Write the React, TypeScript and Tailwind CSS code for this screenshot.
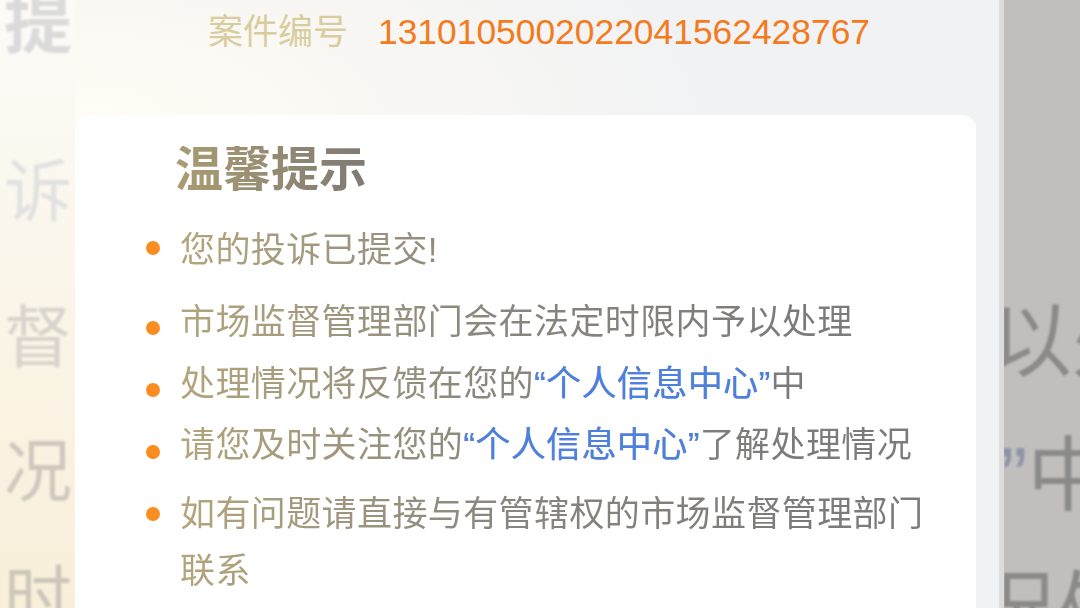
const cjk = "font-['Liberation_Sans','Noto_Sans_CJK_SC',sans-serif]";

type Item = { parts: { text: string; blue?: boolean }[]; gap: string; dot: string };

const items: Item[] = [
  { parts: [{ text: '您的投诉已提交!' }], gap: 'mt-[27px]', dot: 'mt-[20px]' },
  { parts: [{ text: '市场监督管理部门会在法定时限内予以处理' }], gap: 'mt-[15px]', dot: 'mt-[28px]' },
  {
    parts: [{ text: '处理情况将反馈在您的' }, { text: '“个人信息中心”', blue: true }, { text: '中' }],
    gap: 'mt-[5px]',
    dot: 'mt-[28px]',
  },
  {
    parts: [{ text: '请您及时关注您的' }, { text: '“个人信息中心”', blue: true }, { text: '了解处理情况' }],
    gap: 'mt-[4px]',
    dot: 'mt-[29px]',
  },
  { parts: [{ text: '如有问题请直接与有管辖权的市场监督管理部门联系' }], gap: 'mt-[12px]', dot: 'mt-[22px]' },
];

function LeftStrip() {
  return (
    <div className={`w-[75px] shrink-0 overflow-hidden bg-[linear-gradient(180deg,#fcfbf8,#faf5e8_50%,#f8efd9)] ${cjk}`}>
      <div className="blur-[1px] pl-[4px] text-[68px]">
        <div className="-mt-[50px] h-[160px] leading-[148px] font-bold text-[#dadada]">提</div>
        <div className="h-[164px] leading-[164px] text-[#e1e1e1]">诉</div>
        <div className="h-[128px] leading-[128px] text-[#d8d3cc]">督</div>
        <div className="h-[140px] leading-[140px] text-[#cfc8bf]">况</div>
        <div className="h-[112px] leading-[112px] text-[#ccc5bb]">时</div>
      </div>
    </div>
  );
}

function RightStrip() {
  return (
    <div className={`flex-1 overflow-hidden bg-[#c0bfbd] ${cjk}`}>
      <div className="whitespace-nowrap text-[82px] text-[#8a8a8a] blur-[1px]">
        <div className="-ml-[14px] mt-[275px] h-[134px] leading-[134px]">以处</div>
        <div className="-ml-[4px] h-[134px] leading-[134px]">
          <span className="text-[#8b93a8]">”</span>中
        </div>
        <div className="-ml-[30px] h-[134px] leading-[134px]">况处</div>
      </div>
    </div>
  );
}

export default function App() {
  return (
    <div className="flex h-[608px] w-[1080px] overflow-hidden bg-[#c0bfbd]">
      <LeftStrip />

      {/* phone screen */}
      <div className="flex w-[924px] shrink-0 flex-col bg-[#f1f2f4] bg-[radial-gradient(ellipse_640px_260px_at_0%_20%,#fffdf6_0%,#fbf9f3_35%,rgba(241,242,244,0)_100%)]">
        <div className={`flex h-[115px] shrink-0 items-baseline justify-center gap-[30px] pl-[4px] pt-[14px] leading-none ${cjk}`}>
          <span className="text-[35px] text-[#d9cda0]">案件编号</span>
          <span className="text-[35.4px] text-[#f47b1d]">1310105002022041562428767</span>
        </div>

        <div className="mr-[23px] flex-1 rounded-t-[14px] bg-white">
          <div className={`pl-[100px] pt-[31px] ${cjk}`}>
            <h1 className="inline-block bg-[linear-gradient(90deg,#ab9d72,#7e7a73)] bg-clip-text text-[48px] font-bold leading-[48px] text-transparent">
              温馨提示
            </h1>
          </div>

          <ul
            className={`bg-[linear-gradient(90deg,#b4a67b_100px,#8a867f_420px,#7b7b7b_720px)] bg-clip-text text-[35px] leading-[57px] tracking-[0.4px] text-transparent ${cjk}`}
          >
            {items.map((item, i) => (
              <li key={i} className={`flex items-start ${item.gap}`}>
                <span className={`ml-[71px] h-[14px] w-[14px] shrink-0 rounded-full bg-[#fb8c1f] ${item.dot}`} />
                <p className="ml-[20px] w-[760px]">
                  {item.parts.map((p, j) =>
                    p.blue ? (
                      <span key={j} className="text-[#4d80e4]">
                        {p.text}
                      </span>
                    ) : (
                      <span key={j}>{p.text}</span>
                    )
                  )}
                </p>
              </li>
            ))}
          </ul>
        </div>
      </div>

      <div className="w-[5px] shrink-0 bg-[#dcdcdc]" />
      <RightStrip />
    </div>
  );
}
